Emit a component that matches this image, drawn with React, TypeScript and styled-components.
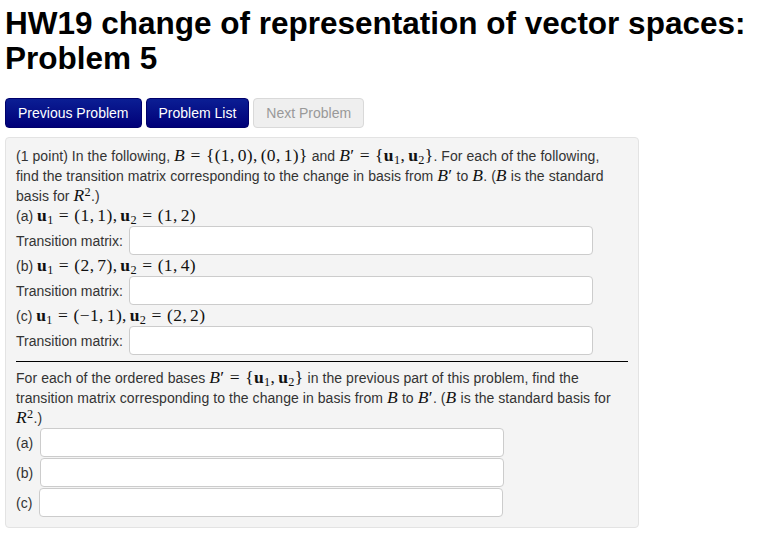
import React from 'react'
import styled, { createGlobalStyle } from 'styled-components'

const GlobalStyle = createGlobalStyle`
  body {
    margin: 0;
    background: #fff;
    font-family: "Liberation Sans", Arial, sans-serif;
    font-size: 14px;
    line-height: 20px;
    color: #333;
  }
`

const Page = styled.div`
  padding: 6px 5px;
`

const Title = styled.h2`
  margin: 0;
  font-size: 31.5px;
  line-height: 35px;
  font-weight: bold;
  color: #000;
`

const Nav = styled.div`
  display: flex;
  gap: 4px;
  margin-top: 22px;
`

const Button = styled.button<{ $disabled?: boolean }>`
  height: 30px;
  padding: 4px 12px;
  font-family: inherit;
  font-size: 14px;
  line-height: 20px;
  border-radius: 4px;
  cursor: pointer;
  color: ${(p) => (p.$disabled ? '#999' : '#fff')};
  border: 1px solid ${(p) => (p.$disabled ? '#d9d9d9' : '#00006a')};
  background: ${(p) =>
    p.$disabled ? '#efefef' : 'linear-gradient(to bottom, #0b1e94, #000078)'};
`

const ProblemBox = styled.div`
  box-sizing: border-box;
  width: 634px;
  margin-top: 9px;
  padding: 8px 10px 9px;
  background: #f4f4f4;
  border: 1px solid #e3e3e3;
  border-radius: 4px;
`

const Para = styled.div`
  white-space: nowrap;
  letter-spacing: 0.06px;
`

const Line = styled.div`
  height: 20px;
  white-space: nowrap;
`

const Row = styled.div<{ $gap: number }>`
  display: flex;
  align-items: center;
  gap: ${(p) => p.$gap}px;
  margin-bottom: 1px;
`

const Answer = styled.input`
  box-sizing: border-box;
  width: 464px;
  height: 29px;
  margin: 0;
  border: 1px solid #ccc;
  border-radius: 4px;
  background: #fff;
`

const Rule = styled.hr`
  margin: 6px 0 6px;
  border: 0;
  border-top: 1px solid #000;
`

// math bits
const M = styled.span`
  font-family: "Liberation Serif", "DejaVu Serif", serif;
  font-size: 17.5px;
  line-height: 1;
  letter-spacing: 0.02em;
  color: #111;
  white-space: nowrap;
`
const V = styled.i`
  font-style: italic;
`
const U = styled.b`
  font-weight: bold;
`
const Sub = styled.span`
  font-size: 70%;
  position: relative;
  top: 0.25em;
`
const Sup = styled.span`
  font-size: 70%;
  position: relative;
  top: -0.45em;
`
const Eq = styled.span`
  margin: 0 0.3em;
`
const Cm = styled.span`
  margin-right: 0.17em;
`

const u = (n: number) => (
  <>
    <U>u</U>
    <Sub>{n}</Sub>
  </>
)

const Bp = () => (
  <M>
    <V>B</V>′
  </M>
)
const Bm = () => (
  <M>
    <V>B</V>
  </M>
)
const R2 = () => (
  <M>
    <V>R</V>
    <Sup>2</Sup>
  </M>
)

const Basis = () => (
  <M>
    <V>B</V>′<Eq>=</Eq>
    {'{'}
    {u(1)}
    <Cm>,</Cm>
    {u(2)}
    {'}'}
  </M>
)

const Pair = ({ a, b }: { a: string; b: string }) => (
  <>
    ({a}
    <Cm>,</Cm>
    {b})
  </>
)

const Case = ({ tag, a, b }: { tag: string; a: [string, string]; b: [string, string] }) => (
  <Line>
    ({tag}){' '}
    <M>
      {u(1)}
      <Eq>=</Eq>
      <Pair a={a[0]} b={a[1]} />
      <Cm>,</Cm>
      {u(2)}
      <Eq>=</Eq>
      <Pair a={b[0]} b={b[1]} />
    </M>
  </Line>
)

const TransitionRow = () => (
  <Row $gap={6}>
    <span>Transition matrix:</span>
    <Answer type="text" />
  </Row>
)

const cases: { tag: string; a: [string, string]; b: [string, string] }[] = [
  { tag: 'a', a: ['1', '1'], b: ['1', '2'] },
  { tag: 'b', a: ['2', '7'], b: ['1', '4'] },
  { tag: 'c', a: ['−1', '1'], b: ['2', '2'] },
]

export default function App() {
  return (
    <>
      <GlobalStyle />
      <Page>
        <Title>
          HW19 change of representation of vector spaces:
          <br />
          Problem 5
        </Title>
        <Nav>
          <Button>Previous Problem</Button>
          <Button>Problem List</Button>
          <Button $disabled>Next Problem</Button>
        </Nav>
        <ProblemBox>
          <Para>
            (1 point) In the following,{' '}
            <M>
              <V>B</V>
              <Eq>=</Eq>
              {'{'}
              <Pair a="1" b="0" />
              <Cm>,</Cm>
              <Pair a="0" b="1" />
              {'}'}
            </M>{' '}
            and <Basis />. For each of the following,
            <br />
            find the transition matrix corresponding to the change in basis from <Bp /> to{' '}
            <Bm />. (<Bm /> is the standard
            <br />
            basis for <R2 />.)
          </Para>
          {cases.map((c) => (
            <React.Fragment key={c.tag}>
              <Case tag={c.tag} a={c.a} b={c.b} />
              <TransitionRow />
            </React.Fragment>
          ))}
          <Rule />
          <Para>
            For each of the ordered bases <Basis /> in the previous part of this problem, find the
            <br />
            transition matrix corresponding to the change in basis from <Bm /> to <Bp />. (
            <Bm /> is the standard basis for
            <br />
            <R2 />.)
          </Para>
          {cases.map((c) => (
            <Row $gap={7} key={c.tag}>
              <span>({c.tag})</span>
              <Answer type="text" />
            </Row>
          ))}
        </ProblemBox>
      </Page>
    </>
  )
}
